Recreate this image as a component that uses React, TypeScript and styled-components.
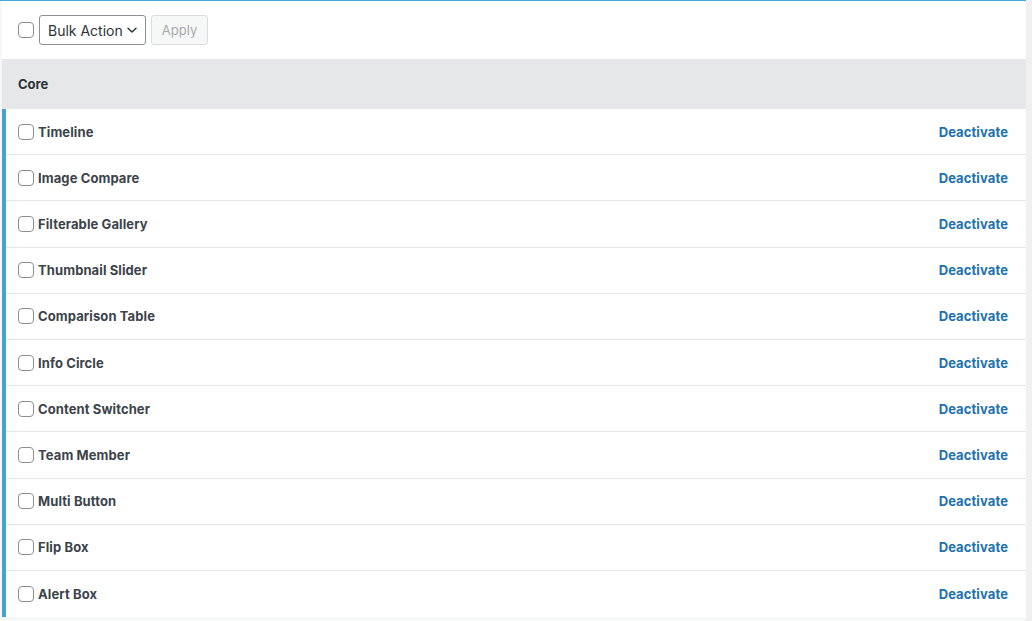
import React from "react";
import styled, { createGlobalStyle } from "styled-components";

const GlobalStyle = createGlobalStyle`
  html, body { margin: 0; padding: 0; }
  body {
    background: #f0f0f1;
    font-family: Inter, "Noto Sans", "Liberation Sans", sans-serif;
    color: #3c434a;
  }
`;

const Page = styled.div`
  width: 1026px;
  height: 621px;
  box-sizing: border-box;
  border-top: 1px solid #46a9d6;
  background: #f6f7f7;
  padding-left: 2px;
`;

const Panel = styled.div`
  background: #ffffff;
  display: flex;
  flex-direction: column;
`;

const Toolbar = styled.div`
  height: 58px;
  box-sizing: border-box;
  display: flex;
  align-items: center;
  gap: 5px;
  padding-left: 16px;
`;

const Check = styled.span`
  display: inline-block;
  width: 16px;
  height: 16px;
  box-sizing: border-box;
  border: 1px solid #8c8f94;
  border-radius: 4px;
  background: #fff;
  flex-shrink: 0;
`;

const Select = styled.div`
  height: 30px;
  width: 107px;
  box-sizing: border-box;
  display: flex;
  align-items: center;
  justify-content: space-between;
  padding: 0 7px 0 8px;
  border: 1px solid #8c8f94;
  border-radius: 3px;
  font-size: 14px;
  color: #2c3338;
  white-space: nowrap;
`;

const ApplyBtn = styled.div`
  height: 30px;
  width: 57px;
  box-sizing: border-box;
  display: flex;
  align-items: center;
  justify-content: center;
  border: 1px solid #dcdcde;
  border-radius: 3px;
  background: #f6f7f7;
  color: #a7aaad;
  font-size: 13px;
`;

const GroupHeader = styled.div`
  height: 50px;
  box-sizing: border-box;
  display: flex;
  align-items: center;
  padding-left: 16px;
  background: #e6e7e9;
  font-size: 13px;
  font-weight: 700;
  color: #2c3338;
`;

const List = styled.div`
  border-left: 4px solid #41a4d3;
  display: flex;
  flex-direction: column;
`;

const Row = styled.div<{ $last?: boolean }>`
  height: 46.2px;
  box-sizing: border-box;
  display: flex;
  align-items: center;
  padding: 0 18px 0 12px;
  border-bottom: ${(p) => (p.$last ? "none" : "1px solid #e2e4e7")};
`;

const Label = styled.span`
  margin-left: 4px;
  font-size: 13px;
  font-weight: 700;
  letter-spacing: 0.1px;
  color: #3c434a;
  flex: 1;
`;

const Action = styled.span`
  font-size: 13px;
  font-weight: 700;
  letter-spacing: 0.1px;
  color: #2271b1;
`;

const items = [
  "Timeline",
  "Image Compare",
  "Filterable Gallery",
  "Thumbnail Slider",
  "Comparison Table",
  "Info Circle",
  "Content Switcher",
  "Team Member",
  "Multi Button",
  "Flip Box",
  "Alert Box",
];

export default function App() {
  return (
    <>
      <GlobalStyle />
      <Page>
        <Panel>
          <Toolbar>
            <Check />
            <Select>
              <span>Bulk Action</span>
              <svg width="12" height="12" viewBox="0 0 12 12" fill="none">
                <path d="M2 4.2l4 3.8 4-3.8" stroke="#2c3338" strokeWidth="1.4" strokeLinecap="round" strokeLinejoin="round" />
              </svg>
            </Select>
            <ApplyBtn>Apply</ApplyBtn>
          </Toolbar>
          <GroupHeader>Core</GroupHeader>
          <List>
            {items.map((name, i) => (
              <Row key={name} $last={i === items.length - 1}>
                <Check />
                <Label>{name}</Label>
                <Action>Deactivate</Action>
              </Row>
            ))}
          </List>
        </Panel>
      </Page>
    </>
  );
}
